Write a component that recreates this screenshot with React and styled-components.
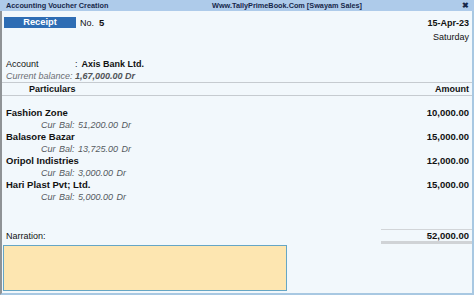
import React from 'react'
import styled, { createGlobalStyle } from 'styled-components'

const GlobalStyle = createGlobalStyle`
      html, body {
            margin: 0;
            padding: 0;
            background: #f2f8fc;
      }
      body {
            font-family: "Liberation Sans", Arial, sans-serif;
            color: #111;
      }
`

const entries = [
      { name: 'Fashion Zone', bal: '51,200.00 Dr', amount: '10,000.00' },
      { name: 'Balasore Bazar', bal: '13,725.00 Dr', amount: '15,000.00' },
      { name: 'Oripol Indistries', bal: '3,000.00 Dr', amount: '12,000.00' },
      { name: 'Hari Plast Pvt; Ltd.', bal: '5,000.00 Dr', amount: '15,000.00' },
]

const Window = styled.div`
      width: 474px;
      height: 295px;
      display: flex;
      flex-direction: column;
      overflow: hidden;
      background: #f2f8fc;
`

const TitleBar = styled.div`
      height: 11px;
      display: flex;
      align-items: center;
      padding: 0 5px 0 6px;
      background: #aecbea;
      color: #17284a;
      font-size: 7.3px;
      font-weight: bold;

      > .left {
            width: 206px;
      }
      > .center {
            flex: 1;
      }
      > .close {
            font-size: 8px;
      }
`

const Body = styled.div`
      flex: 1;
      display: flex;
      flex-direction: column;
      border-left: 2px solid #8f9396;
      border-right: 2px solid #a8c8e2;
      border-bottom: 2px solid #a8c8e2;
      font-size: 9px;
`

const TopRow = styled.div`
      display: flex;
      justify-content: space-between;
      align-items: flex-start;
      padding: 6px 3px 0 2px;
      height: 41px;
`

const VoucherType = styled.div`
      display: flex;
      align-items: center;
      gap: 4px;
      font-size: 9px;

      > .type {
            width: 72px;
            height: 11px;
            line-height: 11px;
            background: #2e6db4;
            color: #fff;
            font-weight: bold;
            font-size: 9.3px;
            text-align: center;
      }
      > .no b {
            margin-left: 5px;
            font-size: 9.5px;
      }
`

const DateBox = styled.div`
      text-align: right;
      line-height: 14px;
      margin-top: -1px;

      > .date {
            font-weight: bold;
            font-size: 9px;
      }
`

const AccountBlock = styled.div`
      padding-left: 4px;
      line-height: 12px;

      > .row {
            display: flex;
      }
      .label {
            width: 69px;
      }
      .name {
            margin-left: 4px;
            font-weight: bold;
      }
      .balance {
            color: #6a6d72;
            font-style: italic;
      }
      .balance b {
            color: #505357;
      }
`

const HeaderRow = styled.div`
      display: flex;
      justify-content: space-between;
      height: 12px;
      line-height: 12px;
      padding: 0 3px 0 27px;
      border-top: 1px solid #c6cbd0;
      border-bottom: 1px solid #c6cbd0;
      font-weight: bold;
`

const EntryList = styled.div`
      margin-top: 11px;
      line-height: 12px;
`

const Entry = styled.div`
      padding: 0 3px 0 4px;

      > .main {
            display: flex;
            justify-content: space-between;
            font-weight: bold;
            font-size: 9.5px;
      }
      > .bal {
            padding-left: 35px;
            color: #555a60;
            font-style: italic;
            word-spacing: 1px;
      }
`

const Spacer = styled.div`
      flex: 1;
`

const Footer = styled.div`
      display: flex;
      align-items: flex-start;
      justify-content: space-between;

      > .narration {
            padding: 1px 0 0 4px;
            line-height: 12px;
      }
`

const Total = styled.div`
      width: 88px;
      height: 11px;
      line-height: 11px;
      text-align: right;
      padding-right: 3px;
      border-top: 1px solid #d2d5d8;
      border-bottom: 3px solid #d0d3d6;
      font-weight: bold;
      font-size: 9.5px;
`

const NarrationBox = styled.div`
      width: 284px;
      height: 46px;
      margin: 1px 0 2px 1px;
      box-sizing: border-box;
      background: #fde6b1;
      border: 1px solid #66a6c5;
`

export default function App() {
      return (
            <Window>
                  <GlobalStyle />

                  <TitleBar>
                        <span className="left">Accounting Voucher Creation</span>
                        <span className="center">Www.TallyPrimeBook.Com [Swayam Sales]</span>
                        <span className="close">✖</span>
                  </TitleBar>

                  <Body>
                        <TopRow>
                              <VoucherType>
                                    <div className="type">Receipt</div>
                                    <div className="no">No.<b>5</b></div>
                              </VoucherType>
                              <DateBox>
                                    <div className="date">15-Apr-23</div>
                                    <div>Saturday</div>
                              </DateBox>
                        </TopRow>

                        <AccountBlock>
                              <div className="row">
                                    <span className="label">Account</span>
                                    <span>:</span>
                                    <span className="name">Axis Bank Ltd.</span>
                              </div>
                              <div className="balance">
                                    Current balance: <b>1,67,000.00 Dr</b>
                              </div>
                        </AccountBlock>

                        <HeaderRow>
                              <span>Particulars</span>
                              <span>Amount</span>
                        </HeaderRow>

                        <EntryList>
                              {entries.map(e => (
                                    <Entry key={e.name}>
                                          <div className="main">
                                                <span>{e.name}</span>
                                                <span>{e.amount}</span>
                                          </div>
                                          <div className="bal">Cur Bal: {e.bal}</div>
                                    </Entry>
                              ))}
                        </EntryList>

                        <Spacer />

                        <Footer>
                              <div className="narration">Narration:</div>
                              <Total>52,000.00</Total>
                        </Footer>

                        <NarrationBox />
                  </Body>
            </Window>
      )
}
